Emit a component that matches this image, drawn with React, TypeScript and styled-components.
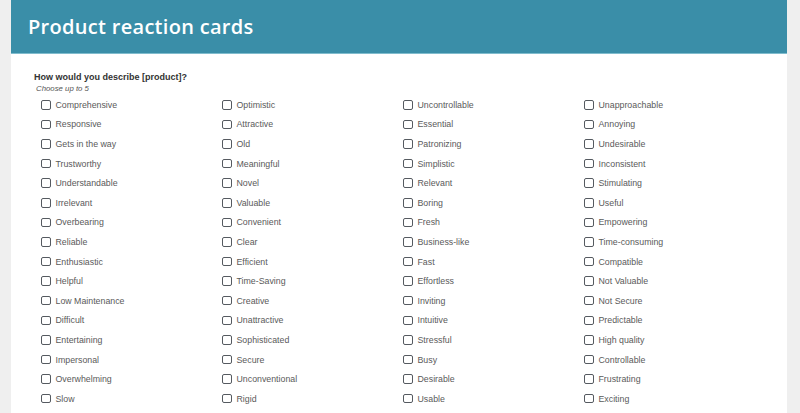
import React from 'react'
import styled, { createGlobalStyle } from 'styled-components'

const Words = [
  ['Comprehensive', 'Optimistic', 'Uncontrollable', 'Unapproachable'],
  ['Responsive', 'Attractive', 'Essential', 'Annoying'],
  ['Gets in the way', 'Old', 'Patronizing', 'Undesirable'],
  ['Trustworthy', 'Meaningful', 'Simplistic', 'Inconsistent'],
  ['Understandable', 'Novel', 'Relevant', 'Stimulating'],
  ['Irrelevant', 'Valuable', 'Boring', 'Useful'],
  ['Overbearing', 'Convenient', 'Fresh', 'Empowering'],
  ['Reliable', 'Clear', 'Business-like', 'Time-consuming'],
  ['Enthusiastic', 'Efficient', 'Fast', 'Compatible'],
  ['Helpful', 'Time-Saving', 'Effortless', 'Not Valuable'],
  ['Low Maintenance', 'Creative', 'Inviting', 'Not Secure'],
  ['Difficult', 'Unattractive', 'Intuitive', 'Predictable'],
  ['Entertaining', 'Sophisticated', 'Stressful', 'High quality'],
  ['Impersonal', 'Secure', 'Busy', 'Controllable'],
  ['Overwhelming', 'Unconventional', 'Desirable', 'Frustrating'],
  ['Slow', 'Rigid', 'Usable', 'Exciting'],
]

const GlobalStyle = createGlobalStyle`
  html, body {
    margin: 0;
    padding: 0;
    background: #efefef;
  }
  body {
    font-family: "Liberation Sans", Arial, sans-serif;
  }
`

const App = () => {
  const cells = Words.flat()
  return (
    <>
      <GlobalStyle />
      <Page>
        <Card>
          <Header>
            <Title>Product reaction cards</Title>
          </Header>
          <Body>
            <Question>How would you describe [product]?</Question>
            <Hint>Choose up to 5</Hint>
            <Grid>
              {cells.map((word, id) => (
                <Option key={id}>
                  <Box type="checkbox" />
                  <Label>{word}</Label>
                </Option>
              ))}
            </Grid>
          </Body>
        </Card>
      </Page>
    </>
  )
}

export default App

const Page = styled.div`
  width: 100%;
  min-height: 100vh;
  padding: 0 13px 0 11px;
  box-sizing: border-box;
`
const Card = styled.div`
  background: #ffffff;
  min-height: 100vh;
`
const Header = styled.div`
  height: 53px;
  background: #3a8ea8;
  border-bottom: 1px solid #80bccd;
  display: flex;
  align-items: center;
  padding-left: 17px;
`
const Title = styled.div`
  color: #ffffff;
  font-family: "Open Sans", "DejaVu Sans", sans-serif;
  font-size: 20px;
  font-weight: 600;
  letter-spacing: 0.3px;
  margin-top: -1px;
`
const Body = styled.div`
  padding: 18px 0 0 23px;
`
const Question = styled.div`
  font-size: 9px;
  font-weight: 700;
  color: #333333;
  line-height: 11px;
`
const Hint = styled.div`
  font-size: 7.8px;
  font-style: italic;
  color: #555555;
  margin-left: 2px;
  line-height: 11px;
`
const Grid = styled.div`
  display: grid;
  grid-template-columns: repeat(4, 181px);
  grid-auto-rows: 19.6px;
  margin-top: 1px;
  padding-left: 7px;
`
const Option = styled.label`
  display: flex;
  align-items: center;
  gap: 5px;
  cursor: pointer;
`
const Box = styled.input`
  appearance: none;
  margin: 0;
  width: 9.5px;
  height: 9.5px;
  border: 1.2px solid #555a60;
  border-radius: 2px;
  box-sizing: border-box;
  background: #ffffff;
`
const Label = styled.span`
  font-size: 8.8px;
  color: #5a5a5a;
`
